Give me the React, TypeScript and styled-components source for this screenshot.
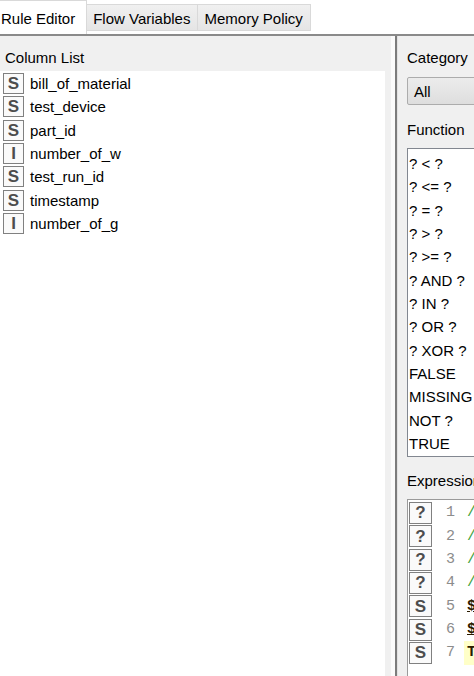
import React from "react";
import styled, { createGlobalStyle } from "styled-components";

const Global = createGlobalStyle`
  html, body { margin: 0; padding: 0; background: #f0f0f0; }
  body { font-family: "Liberation Sans", Arial, sans-serif; font-size: 15px; color: #000; }
  * { box-sizing: border-box; }
`;

const Window = styled.div`
  width: 474px;
  height: 676px;
  overflow: hidden;
  display: flex;
  flex-direction: column;
  background: #f0f0f0;
`;

const TabBar = styled.div`
  height: 34px;
  flex: none;
  display: flex;
  align-items: flex-end;
  background: #ffffff;
  margin-left: -7px;
`;

const Tab = styled.div<{ $selected?: boolean }>`
  display: flex;
  align-items: center;
  white-space: nowrap;
  line-height: 18px;
  height: ${(p) => (p.$selected ? "34px" : "27px")};
  margin-bottom: ${(p) => (p.$selected ? "0" : "3px")};
  padding: ${(p) => (p.$selected ? "2px 11px 0 7px" : "3px 7px 0 6px")};
  background: ${(p) => (p.$selected ? "#ffffff" : "linear-gradient(#f0f0f0, #e5e5e5)")};
  border: 1px solid #d9d9d9;
  border-bottom: ${(p) => (p.$selected ? "none" : "1px solid #d9d9d9")};
  border-left: ${(p) => (p.$selected ? "1px solid #d9d9d9" : "none")};
`;

const TabBody = styled.div`
  flex: 1;
  min-height: 0;
  display: flex;
  border-top: 2px solid #8a8a8a;
`;

const LeftPane = styled.div`
  width: 391px;
  flex: none;
  display: flex;
  flex-direction: column;
  padding-right: 6px;
  background: #f0f0f0;
`;

const SectionTitle = styled.div`
  line-height: 18px;
  padding: 13px 0 4px 5px;
  white-space: nowrap;
`;

const ColumnList = styled.div`
  flex: 1;
  background: #ffffff;
  padding-top: 1px;
`;

const Row = styled.div`
  height: 23.33px;
  display: flex;
  align-items: center;
  gap: 6px;
  padding-left: 3px;
  white-space: nowrap;
`;

const TypeIcon = styled.span<{ $w?: number; $h?: number }>`
  width: ${(p) => p.$w ?? 21}px;
  height: ${(p) => p.$h ?? 21}px;
  flex: none;
  display: inline-flex;
  align-items: center;
  justify-content: center;
  border: 1px solid #808080;
  background: #fafafa;
  color: #4d4d4d;
  font-family: "Liberation Sans", Arial, sans-serif;
  font-weight: bold;
  font-size: 17px;
  line-height: 1;
`;

const Splitter = styled.div`
  width: 6px;
  flex: none;
  background: #fbfbfb;
  border-right: 2px solid #7c7c7c;
`;

const RightPane = styled.div`
  width: 300px;
  flex: none;
  display: flex;
  flex-direction: column;
  padding-left: 9px;
  background: #f0f0f0;
  border-left: 1px solid #e2e2e2;
`;

const Label = styled.div<{ $top: number; $bottom: number }>`
  line-height: 18px;
  padding: ${(p) => `${p.$top}px 0 ${p.$bottom}px 0`};
  white-space: nowrap;
`;

const Combo = styled.div`
  margin-top: 6px;
  height: 28px;
  display: flex;
  align-items: center;
  padding-left: 6px;
  border: 1px solid #acacac;
  border-radius: 2px;
  background: linear-gradient(#ececec, #dedede);
`;

const FunctionList = styled.div`
  border: 1px solid #828790;
  background: #ffffff;
  padding: 3px 0 1px 1px;
`;

const FnItem = styled.div`
  height: 23.33px;
  display: flex;
  align-items: center;
  white-space: nowrap;
`;

const Editor = styled.div`
  flex: 1;
  border: 1px solid #9a9a9a;
  border-bottom: none;
  background: #ffffff;
  padding-top: 1px;
`;

const EditorLine = styled.div`
  height: 23.33px;
  display: flex;
  align-items: center;
  white-space: nowrap;
`;

const IconCell = styled.div`
  width: 26px;
  flex: none;
  display: flex;
  padding-left: 1px;
`;

const LineNo = styled.div`
  width: 28px;
  flex: none;
  text-align: right;
  padding-right: 7px;
  font-family: "Liberation Mono", "Courier New", monospace;
  font-size: 15px;
  color: #8c8c8c;
`;

const Code = styled.div<{ $current?: boolean }>`
  flex: 1;
  align-self: stretch;
  display: flex;
  align-items: center;
  padding-left: 3px;
  margin-left: 2px;
  background: ${(p) => (p.$current ? "#ffffc8" : "transparent")};
  font-family: "Liberation Mono", "Courier New", monospace;
  font-size: 15px;
`;

const Comment = styled.span`
  color: #3fa33f;
`;

const ColRef = styled.span`
  color: #2a1a00;
  font-weight: bold;
  text-decoration: underline;
`;

const Keyword = styled.span`
  color: #2a1a00;
  font-weight: bold;
`;

const columns: { type: "S" | "I"; name: string }[] = [
  { type: "S", name: "bill_of_material" },
  { type: "S", name: "test_device" },
  { type: "S", name: "part_id" },
  { type: "I", name: "number_of_w" },
  { type: "S", name: "test_run_id" },
  { type: "S", name: "timestamp" },
  { type: "I", name: "number_of_g" },
];

const functions = [
  "? < ?",
  "? <= ?",
  "? = ?",
  "? > ?",
  "? >= ?",
  "? AND ?",
  "? IN ?",
  "? OR ?",
  "? XOR ?",
  "FALSE",
  "MISSING",
  "NOT ?",
  "TRUE",
];

type Line = { icon: string; kind: "comment" | "rule" | "default"; text: string };

const lines: Line[] = [
  { icon: "?", kind: "comment", text: "// enter ordered set of rules, e.g.:" },
  { icon: "?", kind: "comment", text: '// $double column name$ > 5.0 => "large"' },
  { icon: "?", kind: "comment", text: '// $string column name$ LIKE "*blue*" => "small and blue"' },
  { icon: "?", kind: "comment", text: '// TRUE => "default"' },
  { icon: "S", kind: "rule", text: '$part_id$ = "A" => "a"' },
  { icon: "S", kind: "rule", text: '$test_device$ = "B" => "b"' },
  { icon: "S", kind: "default", text: 'TRUE => "other"' },
];

function renderCode(l: Line) {
  if (l.kind === "comment") return <Comment>{l.text}</Comment>;
  if (l.kind === "rule") {
    const end = l.text.indexOf("$", 1) + 1;
    return (
      <>
        <ColRef>{l.text.slice(0, end)}</ColRef>
        <span>{l.text.slice(end)}</span>
      </>
    );
  }
  return (
    <>
      <Keyword>TRUE</Keyword>
      <span>{l.text.slice(4)}</span>
    </>
  );
}

export default function App() {
  return (
    <>
      <Global />
      <Window>
        <TabBar>
          <Tab $selected>Rule Editor</Tab>
          <Tab>Flow Variables</Tab>
          <Tab>Memory Policy</Tab>
        </TabBar>
        <TabBody>
          <LeftPane>
            <SectionTitle>Column List</SectionTitle>
            <ColumnList>
              {columns.map((c) => (
                <Row key={c.name}>
                  <TypeIcon>{c.type}</TypeIcon>
                  <span>{c.name}</span>
                </Row>
              ))}
            </ColumnList>
          </LeftPane>
          <Splitter />
          <RightPane>
            <Label $top={13} $bottom={4}>Category</Label>
            <Combo>All</Combo>
            <Label $top={16} $bottom={9}>Function</Label>
            <FunctionList>
              {functions.map((f) => (
                <FnItem key={f}>{f}</FnItem>
              ))}
            </FunctionList>
            <Label $top={15} $bottom={9}>Expression</Label>
            <Editor>
              {lines.map((l, i) => (
                <EditorLine key={i}>
                  <IconCell>
                    <TypeIcon $w={23} $h={22}>{l.icon}</TypeIcon>
                  </IconCell>
                  <LineNo>{i + 1}</LineNo>
                  <Code $current={i === 6}>{renderCode(l)}</Code>
                </EditorLine>
              ))}
            </Editor>
          </RightPane>
        </TabBody>
      </Window>
    </>
  );
}
